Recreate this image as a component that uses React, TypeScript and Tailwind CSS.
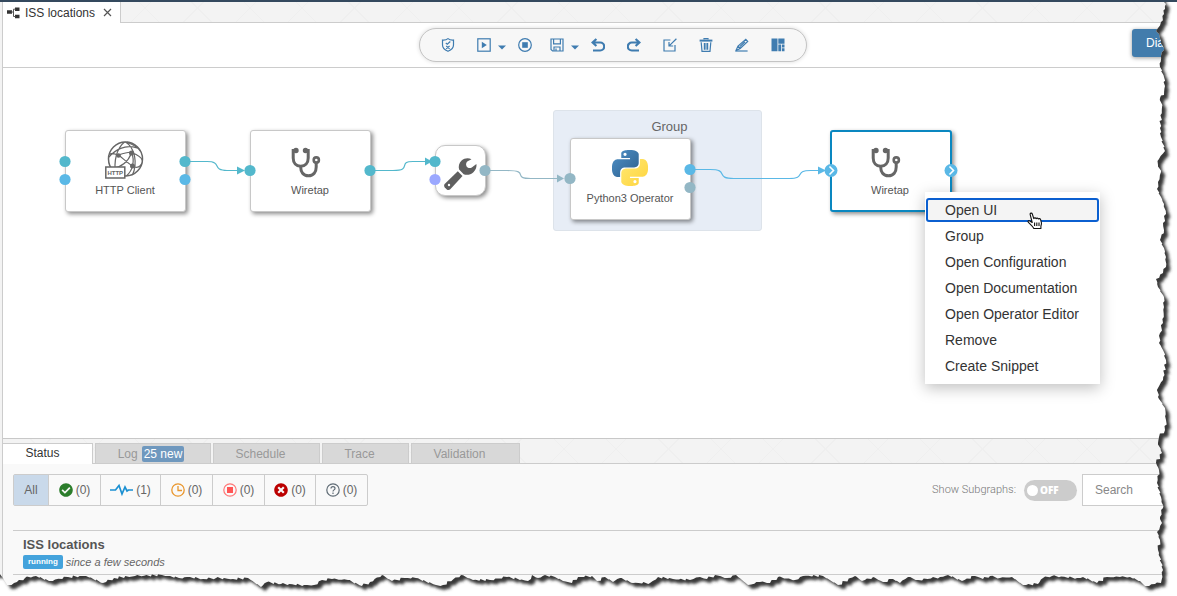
import type { ReactNode } from "react";
import { FaCheckCircle, FaTimesCircle } from "react-icons/fa";

type Point = [number, number];

const menuItems = [
  "Open UI",
  "Group",
  "Open Configuration",
  "Open Documentation",
  "Open Operator Editor",
  "Remove",
  "Create Snippet",
];

const rightEdge: Point[] = [
  [1162, 0], [1166, 4], [1165, 9], [1164, 14], [1161, 22], [1158, 28], [1156, 31], [1159, 34], [1161, 41], [1164, 50],
  [1161, 56], [1160, 67], [1164, 77], [1165, 86], [1164, 95], [1160, 98], [1162, 107], [1160, 128], [1161, 137], [1165, 151],
  [1159, 159], [1158, 165], [1161, 172], [1158, 182], [1157, 189], [1161, 197], [1164, 204], [1166, 214], [1163, 223], [1164, 230],
  [1160, 240], [1164, 248], [1166, 257], [1166, 267], [1163, 273], [1156, 279], [1158, 287], [1164, 297], [1164, 307], [1163, 323],
  [1160, 333], [1159, 343], [1163, 350], [1166, 360], [1163, 380], [1158, 388], [1158, 397], [1165, 408], [1166, 420], [1165, 430],
  [1159, 437], [1158, 443], [1162, 453], [1156, 463], [1159, 470], [1157, 483], [1161, 497], [1163, 508], [1160, 517], [1162, 523],
  [1157, 532], [1160, 540], [1158, 550], [1163, 570], [1161, 583],
];

const bottomEdge: Point[] = [
  [1155, 584], [1145, 586], [1140, 581], [1130, 577], [1120, 577], [1107, 577], [1097, 583], [1083, 577], [1077, 578], [1052, 576],
  [1043, 578], [1038, 584], [1023, 585], [1012, 577], [1000, 578], [990, 576], [983, 579], [975, 576], [962, 581], [948, 575],
  [940, 577], [918, 580], [908, 577], [900, 583], [893, 579], [883, 582], [873, 577], [862, 581], [855, 576], [838, 585],
  [823, 576], [803, 576], [795, 580], [778, 577], [770, 583], [760, 582], [748, 585], [736, 575], [727, 578], [715, 575],
  [707, 579], [700, 577], [690, 580], [673, 579], [658, 577], [650, 583], [633, 583], [620, 578], [613, 582], [605, 577],
  [597, 581], [592, 576], [578, 577], [572, 583], [563, 581], [555, 577], [545, 575], [538, 578], [532, 575], [528, 581],
  [507, 577], [490, 580], [473, 580], [461, 575], [443, 585], [436, 585], [416, 578], [405, 578], [392, 581], [382, 575],
  [370, 582], [362, 586], [348, 580], [332, 579], [322, 580], [314, 585], [304, 585], [281, 584], [267, 582], [261, 587],
  [248, 578], [233, 579], [216, 578], [203, 579], [190, 577], [179, 578], [162, 575], [135, 576], [114, 578], [103, 583],
  [86, 576], [68, 577], [49, 581], [36, 576], [25, 578], [14, 583], [7, 585], [3, 578], [0, 574],
];

// adds small teeth between the main points of the tear
function roughen(points: Point[]) {
  return points
    .flatMap(([x, y], i) => {
      const next = points[i + 1];
      if (!next) return [[x, y]];
      const [nx, ny] = next;
      const steps = Math.max(1, Math.round(Math.hypot(nx - x, ny - y) / 3));
      return Array.from({ length: steps }, (_, s) => {
        const t = s / steps;
        const tooth = s === 0 ? 0 : Math.sin(i * 7.3 + s * 2.7) * 1.1;
        return [x + (nx - x) * t + tooth, y + (ny - y) * t + tooth];
      });
    })
    .map(([x, y]) => `${x.toFixed(1)} ${y.toFixed(1)}`)
    .join("L");
}

const paper = `M-20 -20L1162 -20L${roughen([...rightEdge, ...bottomEdge])}L-20 574Z`;

const TornEdge = () => (
  <svg className="pointer-events-none absolute right-0 bottom-0 z-30" width="1177" height="596" aria-hidden="true">
    <defs>
      <clipPath id="outside">
        <path d={`M-20 -20H1200V620H-20Z${paper}`} clipRule="evenodd" />
      </clipPath>
      <filter id="soft" x="-5%" y="-5%" width="110%" height="110%">
        <feGaussianBlur stdDeviation="1.8" />
      </filter>
    </defs>
    <g clipPath="url(#outside)">
      <rect width="1177" height="596" fill="#fff" />
      <path d={paper} fill="#383838" transform="translate(4 4)" filter="url(#soft)" />
    </g>
  </svg>
);

const ToolIcon = ({ children }: { children: ReactNode }) => (
  <svg width="14" height="14" viewBox="0 0 14 14" fill="none" stroke="currentColor" strokeWidth="1.2">
    {children}
  </svg>
);

const ToolButton = ({ label, className, children }: { label: string; className: string; children: ReactNode }) => (
  <button aria-label={label} className={`flex h-8 items-center justify-center ${className}`}>
    {children}
  </button>
);

const Caret = () => (
  <svg width="8" height="5" viewBox="0 0 8 5" className="mt-1 shrink-0" fill="currentColor">
    <path d="M0 .5h8L4 4.5z" />
  </svg>
);

const Toolbar = () => (
  <div className="flex h-[34px] items-center rounded-full border border-[#c4c4c4] bg-[#f7f7f7] px-2.5 text-[#3f7cb0] shadow-[0_0_4px_rgba(0,0,0,0.15)]">
    <ToolButton label="Validate" className="w-9">
      <ToolIcon>
        <path d="M7 .6C8.400 1.700 10.400 2.200 12.500 2v5c0 3-2.300 5-5.500 6.300C3.800 12 1.500 10 1.500 7V2C3.600 2.200 5.600 1.700 7 .6z" />
        <path d="m4.800 5 1.500 1.300 3-2.800M5.200 8l3.400 2.800M8.600 8l-3.400 2.800" />
      </ToolIcon>
    </ToolButton>
    <ToolButton label="Run" className="ml-1 w-7">
      <ToolIcon>
        <rect x=".8" y=".8" width="12.4" height="12.4" />
        <path d="m4.8 3.8 5 3.2-5 3.2z" fill="currentColor" stroke="none" />
      </ToolIcon>
    </ToolButton>
    <ToolButton label="Run options" className="w-2"><Caret /></ToolButton>
    <ToolButton label="Stop" className="w-[38px]">
      <ToolIcon>
        <circle cx="7" cy="7" r="6.3" />
        <rect x="4.2" y="4.2" width="5.6" height="5.6" fill="currentColor" stroke="none" />
      </ToolIcon>
    </ToolButton>
    <ToolButton label="Save" className="w-[26px]">
      <ToolIcon>
        <path d="M1 1h12v12H2.6L1 11.4z" />
        <path d="M3.6 1v4.8h6.8V1M4 13V9h6v4M6 10.6V13" />
      </ToolIcon>
    </ToolButton>
    <ToolButton label="Save options" className="w-2.5"><Caret /></ToolButton>
    <ToolButton label="Undo" className="w-9">
      <ToolIcon>
        <path d="M5.400 1 1.600 4.500l3.800 3.500M1.800 4.500h7.400a4 4 0 0 1 0 8H2" strokeWidth="2.200" />
      </ToolIcon>
    </ToolButton>
    <ToolButton label="Redo" className="w-9">
      <ToolIcon>
        <path d="m8.600 1 3.800 3.500L8.600 8M12.200 4.500H4.800a4 4 0 0 0 0 8H12" strokeWidth="2.200" />
      </ToolIcon>
    </ToolButton>
    <ToolButton label="Import" className="w-9">
      <ToolIcon>
        <path d="M7.4 2H1v11h11V7M13.4.8 6.4 7.6M6 4v4h4.2" />
      </ToolIcon>
    </ToolButton>
    <ToolButton label="Delete" className="w-9">
      <ToolIcon>
        <path d="M5 1.6V.6h4v1M2.2 4.2 3 13.4h8l.8-9.2M5.4 5v6.8M7 5v6.8M8.6 5v6.8" />
        <path d="M.6 2.6h12.8" strokeWidth="2" />
      </ToolIcon>
    </ToolButton>
    <ToolButton label="Edit" className="w-9">
      <ToolIcon>
        <path d="M1 12.6 3 8 10.800 1.300l1.900 2.100L5.200 10.500zM3 8l2.200 2.500M10 3.800 5 8.500" />
        <path d="M1 13h11.6" />
      </ToolIcon>
    </ToolButton>
    <ToolButton label="Auto layout" className="w-9">
      <svg width="14" height="14" viewBox="0 0 14 14" fill="currentColor">
        <path d="M.5.5h6v12.7h-6zM7.3.5h6.2v5.2H7.3zM7.3 6.6h2.9v6.6H7.3zM11 6.6h2.5v2.8H11zM11 10.3h2.5v2.9H11z" />
      </svg>
    </ToolButton>
  </div>
);

const HttpIcon = () => (
  <svg width="40" height="38" viewBox="0 0 40 38" fill="none" stroke="#666" strokeWidth="1.2">
    <circle cx="20.500" cy="18" r="17" strokeWidth="1.500" />
    <path d="M19.500 1C12 7 8 20 11 34M20.500 1c10 6 12 22 7 33M22 1c5 3 11 4 13 9M4 16C10 9 20 3 32 7M13.500 14c6-2 12-3 13-2.500s9 3 11 8M13.500 14c4 3 9 8 14 11s8 0 9-2M26.500 12c-3 8-9 14-20 16M4 13c3-1 6 0 9 1M26.500 12c2 4 2 9 1 13-1 5-4 8-6 10" />
    <g fill="#666" stroke="none">
      <circle cx="13.500" cy="14.500" r="2.300" />
      <circle cx="26.500" cy="12" r="2.500" />
      <circle cx="27.500" cy="25" r="2.500" />
    </g>
    <rect x=".8" y="26" width="19" height="11" fill="#fff" strokeWidth="1.500" />
    <text x="10.300" y="33.800" textAnchor="middle" fontSize="6" fontWeight="bold" fill="#666" stroke="none">HTTP</text>
  </svg>
);

const StethoscopeIcon = () => (
  <svg width="42" height="36" viewBox="0 0 42 36" fill="none" stroke="#666" strokeWidth="3" strokeLinecap="round">
    <path d="M6 8.500H4.200V16c0 5 3 8.300 7.500 8.300S19.200 21 19.200 16V8.500H17.500M11.700 25c0 5 2.500 8.800 7.700 8.800s7.800-3.800 7.800-8.800V21" />
    <circle cx="7" cy="8.500" r="1.200" fill="#666" />
    <circle cx="16.500" cy="8.500" r="1.200" fill="#666" />
    <circle cx="27.300" cy="18" r="2.600" strokeWidth="2.600" />
  </svg>
);

const WrenchIcon = () => (
  <svg width="36" height="36" viewBox="0 0 36 36" fill="none" stroke="#5f5f5f">
    <path d="M28.500 2.300C25.500.6 21.500.9 18.600 3.600c-2.600 2.500-3.400 5.900-2.500 9l4.600 4.700c3.300 1.200 7 .4 9.700-2.100 2.500-2.400 3.500-5.300 3-8.100l-4.600 3.300c-2 1.400-4.500.6-5.400-1.500-.8-1.900 0-3.900 1.700-4.800z" fill="#5f5f5f" stroke="none" />
    <path d="m14.800 14.300 4.700 4.800L7.300 32.300c-1 1-2.500 1-3.500.1l-2-2c-1-1-.9-2.600.1-3.600z" fill="#5f5f5f" stroke="none" />
    <circle cx="6" cy="28" r="1.200" fill="#fff" stroke="none" />
  </svg>
);

const PythonIcon = () => (
  <svg width="36" height="36" viewBox="0 0 24 24">
    <defs>
      <linearGradient id="pyBlue" x1="0" y1="0" x2="1" y2="1">
        <stop offset="0" stopColor="#4f91c8" />
        <stop offset="1" stopColor="#2c5f8d" />
      </linearGradient>
      <linearGradient id="pyYellow" x1="0" y1="0" x2="1" y2="1">
        <stop offset="0" stopColor="#ffe873" />
        <stop offset="1" stopColor="#ffd43b" />
      </linearGradient>
    </defs>
    <path
      fill="url(#pyBlue)"
      d="M14.25.18l.9.2.73.26.59.3.45.32.34.34.25.34.16.33.1.3.04.26.02.2-.01.13V8.5l-.05.63-.13.55-.21.46-.26.38-.3.31-.33.25-.35.19-.35.14-.33.1-.3.07-.26.04-.21.02H8.77l-.69.05-.59.14-.5.22-.41.27-.33.32-.27.35-.2.36-.15.37-.1.35-.07.32-.04.27-.02.21v3.06H3.17l-.21-.03-.28-.07-.32-.12-.35-.18-.36-.26-.36-.36-.35-.46-.32-.59-.28-.73-.21-.88-.14-1.05-.05-1.23.06-1.22.16-1.04.24-.87.32-.71.36-.57.4-.44.42-.33.42-.24.4-.16.36-.1.32-.05.24-.01h.16l.06.01h8.16v-.83H6.18l-.01-2.75-.02-.37.05-.34.11-.31.17-.28.25-.26.31-.23.38-.2.44-.18.51-.15.58-.12.64-.1.71-.06.77-.04.84-.02 1.27.05zm-6.3 1.98l-.23.33-.08.41.08.41.23.34.33.22.41.09.41-.09.33-.22.23-.34.08-.41-.08-.41-.23-.33-.33-.22-.41-.09-.41.09z"
    />
    <path
      fill="url(#pyYellow)"
      d="M21.04 6.11l.28.06.32.12.35.18.36.27.36.35.35.47.32.59.28.73.21.88.14 1.04.05 1.23-.06 1.23-.16 1.04-.24.86-.32.71-.36.57-.4.45-.42.33-.42.24-.4.16-.36.09-.32.05-.24.02-.16-.01h-8.22v.82h5.84l.01 2.76.02.36-.05.34-.11.31-.17.29-.25.25-.31.24-.38.2-.44.17-.51.15-.58.13-.64.09-.71.07-.77.04-.84.01-1.27-.04-1.07-.14-.9-.2-.73-.25-.59-.3-.45-.33-.34-.34-.25-.34-.16-.33-.1-.3-.04-.25-.02-.2.01-.13v-5.34l.05-.64.13-.54.21-.46.26-.38.3-.32.33-.24.35-.2.35-.14.33-.1.3-.06.26-.04.21-.02.13-.01h5.84l.69-.05.59-.14.5-.21.41-.28.33-.32.27-.35.2-.36.15-.36.1-.35.07-.32.04-.28.02-.21V6.07h2.09l.14.01zm-6.47 14.25l-.23.33-.08.41.08.41.23.33.33.23.41.08.41-.08.33-.23.23-.33.08-.41-.08-.41-.23-.33-.33-.23-.41-.08-.41.08z"
    />
  </svg>
);

const OperatorNode = ({ label, place, selected, children }: { label: string; place: string; selected?: boolean; children: ReactNode }) => (
  <div
    className={`absolute flex h-[82px] flex-col items-center rounded-[3px] bg-white text-[11px] leading-6 text-[#555] shadow-[2px_2px_4px_rgba(0,0,0,0.45)] ${place} ${
      selected ? "w-[122px] border-2 border-[#0a87c0] pt-2.5 pr-0.5" : "w-[121px] border border-[#c8c8c8] pt-[11px] pr-px"
    }`}
  >
    <div className="flex h-9 items-center">{children}</div>
    {label}
  </div>
);

// canvas coordinates, origin at the top left corner of the graph area
const ports = [
  { x: 62, y: 93, color: "#53b8cc" },
  { x: 62, y: 111, color: "#5ab8e6" },
  { x: 182, y: 93, color: "#53b8cc" },
  { x: 182, y: 111, color: "#5ab8e6" },
  { x: 247, y: 102, color: "#53b8cc" },
  { x: 367, y: 102, color: "#53b8cc" },
  { x: 432, y: 93, color: "#53b8cc" },
  { x: 432, y: 111, color: "#9ba8ff" },
  { x: 482, y: 102, color: "#93b7c5" },
  { x: 567, y: 110, color: "#93b7c5" },
  { x: 687, y: 101, color: "#5ab8e6" },
  { x: 687, y: 119, color: "#93b7c5" },
];

const links = [
  { d: "M182 93.500H204C220 93.500 208 102.500 224 102.500H238", tip: "M234 98.500l8 4-8 4z", color: "#53b8cc" },
  { d: "M367 102.500H390C410 102.500 394 93.500 410 93.500H424", tip: "M422 89.500l7 4-7 4z", color: "#53b8cc" },
  { d: "M482 102.500H504C528 102.500 508 110.500 528 110.500H556", tip: "M554 106.500l7 4-7 4z", color: "#93b7c5" },
  { d: "M687 101.500H707C727 101.500 711 110.500 731 110.500H786C804 110.500 790 102.500 808 102.500H818", tip: "M815 98.500l8 4-8 4z", color: "#5ab8e6" },
];

const Connections = () => (
  <svg className="pointer-events-none absolute inset-0 h-full w-full" aria-hidden="true">
    {links.map((link) => (
      <g key={link.d}>
        <path d={link.d} fill="none" stroke={link.color} strokeWidth="1.2" />
        <path d={link.tip} fill={link.color} />
      </g>
    ))}
    {ports.map((port) => (
      <circle key={`${port.x}-${port.y}`} cx={port.x} cy={port.y + 0.5} r="5.600" fill={port.color} />
    ))}
    {[828, 948].map((x) => (
      <g key={x}>
        <circle cx={x} cy="102.500" r="6.500" fill="#5ab8e6" />
        <path d={`M${x - 1.5} 98.5l4 4-4 4`} fill="none" stroke="#fff" strokeWidth="1.600" />
      </g>
    ))}
  </svg>
);

const ContextMenu = () => (
  <ul className="absolute top-[124px] left-[922px] w-[175px] bg-white py-[5px] text-sm text-[#333] shadow-[0_4px_14px_rgba(0,0,0,0.25)]">
    {menuItems.map((item, i) => (
      <li key={item} className="flex h-[26px] items-center px-px">
        <button
          className={`h-6 w-full rounded-[3px] border-2 pl-[17px] text-left leading-5 ${
            i === 0 ? "border-[#0b5fd0] bg-[#f4f4f4]" : "border-transparent"
          }`}
        >
          {item}
        </button>
      </li>
    ))}
  </ul>
);

const HandCursor = () => (
  <svg className="absolute top-[144px] left-[1024px]" width="16" height="18" viewBox="0 0 16 18" fill="#fff" stroke="#111" strokeWidth="1.1" strokeLinejoin="round">
    <path d="M5.200 10.500 3.200 2.600C2.800 1 4.800.500 5.300 2l1.500 4.600c.300-1 2-1 2.300.1.400-.9 2-.7 2.300.3.500-.7 1.900-.5 2.200.6l.8 3c.3 1.300-.2 2.500-.5 3.400v2.500H6.800C5.500 13.800 3 12 1.400 10.400c-1-1 0-2 1-1.700z" />
    <path d="M7.600 10.500v3.500M9.800 10.500v3.500M12 10.500v3.500" />
  </svg>
);

const GraphCanvas = () => (
  <div className="relative h-[371px] border-b border-[#c8c8c8] bg-white">
    <div className="absolute top-[42px] left-[550px] h-[121px] w-[209px] rounded-[3px] border border-[#dde3ea] bg-[#e7edf6]">
      <p className="pt-2 pr-1 pl-7 text-center text-[13px] leading-4 text-[#666]">Group</p>
    </div>
    <OperatorNode label="HTTP Client" place="top-[62px] left-[62px]"><HttpIcon /></OperatorNode>
    <OperatorNode label="Wiretap" place="top-[62px] left-[247px]"><StethoscopeIcon /></OperatorNode>
    <div className="absolute top-[77px] left-[432px] flex size-[51px] items-center justify-center rounded-[10px] border border-[#c8c8c8] bg-white pt-2 shadow-[2px_2px_4px_rgba(0,0,0,0.45)]">
      <WrenchIcon />
    </div>
    <OperatorNode label="Python3 Operator" place="top-[70px] left-[567px]"><PythonIcon /></OperatorNode>
    <OperatorNode label="Wiretap" place="top-[62px] left-[827px]" selected><StethoscopeIcon /></OperatorNode>
    <Connections />
    <ContextMenu />
    <HandCursor />
  </div>
);

const filters = [
  { name: "Completed", count: 0, width: "w-[52px]", icon: <FaCheckCircle size={14} color="#2b7d2b" /> },
  {
    name: "Running",
    count: 1,
    width: "w-[60px]",
    icon: (
      <svg width="23" height="14" viewBox="0 0 23 14" fill="none" stroke="#1b90d2" strokeWidth="1.700">
        <path d="M0 7h5.500L9 2.500l3 8.500 3-7 2 4 1.500-1H23" />
      </svg>
    ),
  },
  {
    name: "Pending",
    count: 0,
    width: "w-[52px]",
    icon: (
      <svg width="14" height="14" viewBox="0 0 14 14" fill="none" stroke="#e9962c" strokeWidth="1.300">
        <circle cx="7" cy="7" r="6.200" />
        <path d="M7 3v4.500h4" />
      </svg>
    ),
  },
  {
    name: "Stopping",
    count: 0,
    width: "w-[52px]",
    icon: (
      <svg width="14" height="14" viewBox="0 0 14 14" fill="none" stroke="#f77" strokeWidth="1.200">
        <circle cx="7" cy="7" r="6.200" />
        <rect x="4" y="4" width="6" height="6" fill="#f55" stroke="none" />
      </svg>
    ),
  },
  { name: "Dead", count: 0, width: "w-[51px]", icon: <FaTimesCircle size={14} color="#b00" /> },
  {
    name: "Unknown",
    count: 0,
    width: "w-[52px]",
    icon: (
      <svg width="14" height="14" viewBox="0 0 14 14" fill="none" stroke="#5f6b75" strokeWidth="1.200">
        <circle cx="7" cy="7" r="6.200" />
        <path d="M5 5.500C5 2.900 9 2.900 9 5.400 9 7 7 6.800 7 8.600M7 9.600V11" />
      </svg>
    ),
  },
];

const StatusPanel = () => (
  <section className="grow bg-[#f9f9f9] pt-2.5 pl-2.5">
    <div className="flex items-center justify-between">
      <div className="flex h-8 rounded-[2px] border border-[#ccc] text-xs text-[#666]">
        <button className="w-[34px] bg-[#c9d9ea]">All</button>
        {filters.map((f) => (
          <button key={f.name} aria-label={f.name} className={`flex items-center justify-center gap-[3px] border-l border-[#ccc] ${f.width}`}>
            {f.icon}
            <span>({f.count})</span>
          </button>
        ))}
      </div>
      <div className="flex items-center">
        <label htmlFor="subgraphs" className="mr-2 font-['Roboto',sans-serif] text-[11px] font-light text-[#777]">
          Show Subgraphs:
        </label>
        <label className="relative flex h-[21px] w-[53px] items-center rounded-full bg-[#ccc] pl-[3px]">
          <input id="subgraphs" type="checkbox" className="sr-only" />
          <span className="size-[11px] rounded-full bg-white" />
          <span className="ml-0.5 font-['Open_Sans',sans-serif] text-[10px] font-extrabold text-white">OFF</span>
        </label>
        <input
          type="search"
          aria-label="Search"
          placeholder="Search"
          className="ml-[5px] h-8 w-[95px] border border-r-0 border-[#ccc] bg-white pl-3 text-xs placeholder:text-[#888]"
        />
      </div>
    </div>
    <ul className="mt-6 border-y border-[#ccc]">
      <li className="px-2.5 pt-1.5 pb-[3px] text-[#666]">
        <h2 className="text-[13px] leading-4 font-bold text-[#555]">ISS locations</h2>
        <p className="flex items-center gap-[3px] text-[11px] leading-[18px] italic">
          <span className="rounded-[2px] bg-[#44a3dc] px-[5px] text-[8px] leading-[14px] font-bold text-white not-italic">running</span>
          since a few seconds
        </p>
      </li>
    </ul>
  </section>
);

const tabs = [
  { name: "Schedule", width: "w-[107px]" },
  { name: "Trace", width: "w-[87px]" },
  { name: "Validation", width: "w-[109px]" },
];

const gutter =
  "bg-[#f3f3f3] bg-[repeating-linear-gradient(45deg,transparent_0_36px,#efefef_36px_37px),repeating-linear-gradient(-45deg,transparent_0_36px,#efefef_36px_37px)]";

export default function App() {
  return (
    <div className="relative flex min-h-screen flex-col overflow-hidden border-t-2 border-[#34495e] bg-[#f3f3f3] pl-0.5 font-['Liberation_Sans',Arial,sans-serif]">
      <main className="flex grow flex-col border-l border-[#ccc]">
        <div className={`flex h-[21px] border-b border-[#ccc] ${gutter}`}>
          <div className="-mb-px flex h-[21px] w-[118px] items-center border-r border-[#ccc] bg-white pl-1 text-xs text-[#333]">
            <svg width="13" height="12" viewBox="0 0 13 12" fill="#333">
              <path d="M0 3.200h5v3.500H0zM8 .5h4.500V4H8zM8 7.800h4.500v3.500H8z" />
              <path d="M4 5h2.500M8.500 2.200h-2v7.300h2" fill="none" stroke="#555" />
            </svg>
            <span className="ml-[5px]">ISS locations</span>
            <button aria-label="Close tab" className="ml-2">
              <svg width="9" height="9" viewBox="0 0 9 9" stroke="#555" strokeWidth="1.200">
                <path d="m1 1 7 7M8 1 1 8" />
              </svg>
            </button>
          </div>
        </div>

        <header className="flex h-[45px] items-center border-b border-[#ccc] bg-white pl-[46px]">
          <div className="flex-1" />
          <Toolbar />
          <div className="flex flex-1 justify-end">
            <button className="mb-1 h-7 w-[45px] rounded-l-[3px] bg-[#427cac] pl-3.5 text-left text-xs text-white shadow-[0_1px_4px_rgba(0,0,0,0.4)]">
              Dia
            </button>
          </div>
        </header>

        <GraphCanvas />

        <div className={`flex h-[25px] items-end gap-0.5 border-b border-[#ccc] text-xs text-[#999] ${gutter}`}>
          <button className="-mb-px h-[21px] w-[90px] border-t border-r border-[#ccc] bg-[#fff] pr-2.5 pb-0.5 text-[#333]">Status</button>
          <button className="flex h-5 w-[116px] items-center justify-center gap-1 border border-b-0 border-[#ccc] bg-[#d8d8d8] pr-1">
            Log
            <span className="rounded-[2px] bg-[#6f98be] px-0.5 leading-4 text-white">25 new</span>
          </button>
          {tabs.map((tab) => (
            <button key={tab.name} className={`h-5 border border-b-0 border-[#ccc] bg-[#d8d8d8] pr-3 ${tab.width}`}>
              {tab.name}
            </button>
          ))}
        </div>

        <StatusPanel />
      </main>
      <TornEdge />
    </div>
  );
}
